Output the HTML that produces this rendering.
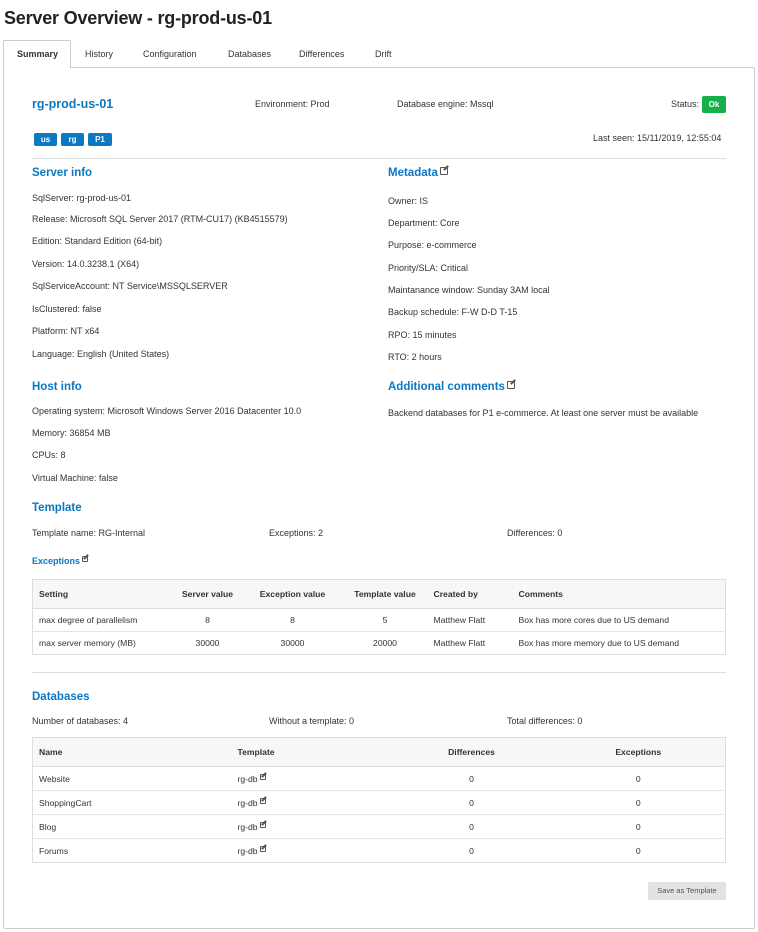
<!DOCTYPE html>
<html><head><meta charset="utf-8"><style>
*{margin:0;padding:0;box-sizing:border-box}
body{width:758px;height:932px;background:#fff;font-family:"Liberation Sans",sans-serif;color:#333;font-size:9px;position:relative;overflow:hidden}
.a{position:absolute;white-space:nowrap}
h1{position:absolute;left:4px;top:8px;font-size:18px;font-weight:bold;color:#222;letter-spacing:-0.2px}
.tab{position:absolute;top:49px;font-size:9px;color:#333}
.h{position:absolute;color:#0a78c2;font-weight:bold;font-size:11.5px;white-space:nowrap}
.b{position:absolute;top:133px;height:13px;background:#0a78c2;color:#fff;font-weight:bold;font-size:8px;border-radius:2px;text-align:center;line-height:13px}
.hr{position:absolute;height:1px;background:#ddd}
.ic{display:inline-block;width:8px;height:8px;border:1px solid #555;position:relative;margin-left:2px;vertical-align:top;border-radius:1px}
.ic:after{content:"";position:absolute;right:-2px;top:-1px;width:6px;height:2px;background:#555;transform:rotate(-45deg)}
table{position:absolute;border-collapse:collapse;border:1px solid #ddd;border-radius:3px;font-size:8.6px}
th{background:#f6f7f8;text-align:left;font-weight:bold;color:#333;height:29px;border-bottom:1px solid #ddd;padding:0 6px}
td{height:23px;border-top:1px solid #e5e5e5;padding:0 6px}
.c{text-align:center}
</style></head><body>
<h1>Server Overview - rg-prod-us-01</h1>
<div class="a" style="left:3px;top:40px;width:68px;height:28px;border:1px solid #ccc;border-bottom:none;background:#fff;z-index:2;border-radius:2px 2px 0 0"></div>
<div class="a" style="left:3px;top:67px;width:752px;height:862px;border:1px solid #ccc;border-radius:0 2px 2px 2px"></div>
<div class="tab" style="left:17px;font-weight:bold;z-index:3">Summary</div>
<div class="tab" style="left:85px">History</div>
<div class="tab" style="left:143px">Configuration</div>
<div class="tab" style="left:228px">Databases</div>
<div class="tab" style="left:299px">Differences</div>
<div class="tab" style="left:375px">Drift</div>

<div class="h" style="left:32px;top:97px;font-size:12.5px">rg-prod-us-01</div>
<div class="a" style="left:255px;top:99px">Environment: Prod</div>
<div class="a" style="left:397px;top:99px">Database engine: Mssql</div>
<div class="a" style="left:671px;top:99px">Status:</div>
<div class="a" style="left:702px;top:96px;width:24px;height:17px;background:#16b04a;color:#fff;font-weight:bold;font-size:8px;text-align:center;line-height:17px;border-radius:2px">Ok</div>
<div class="b" style="left:34px;width:23px">us</div>
<div class="b" style="left:61px;width:23px">rg</div>
<div class="b" style="left:88px;width:24px">P1</div>
<div class="a" style="left:593px;top:133px">Last seen: 15/11/2019, 12:55:04</div>
<div class="hr" style="left:32px;top:158px;width:694px"></div>

<div class="h" style="left:32px;top:167px">Server info</div>
<div class="a" style="left:32px;top:193px">SqlServer: rg-prod-us-01</div>
<div class="a" style="left:32px;top:214px">Release: Microsoft SQL Server 2017 (RTM-CU17) (KB4515579)</div>
<div class="a" style="left:32px;top:236px">Edition: Standard Edition (64-bit)</div>
<div class="a" style="left:32px;top:259px">Version: 14.0.3238.1 (X64)</div>
<div class="a" style="left:32px;top:281px">SqlServiceAccount: NT Service\MSSQLSERVER</div>
<div class="a" style="left:32px;top:304px">IsClustered: false</div>
<div class="a" style="left:32px;top:326px">Platform: NT x64</div>
<div class="a" style="left:32px;top:349px">Language: English (United States)</div>

<div class="h" style="left:388px;top:167px">Metadata<span class="ic"></span></div>
<div class="a" style="left:388px;top:196px">Owner: IS</div>
<div class="a" style="left:388px;top:218px">Department: Core</div>
<div class="a" style="left:388px;top:240px">Purpose: e-commerce</div>
<div class="a" style="left:388px;top:263px">Priority/SLA: Critical</div>
<div class="a" style="left:388px;top:285px">Maintanance window: Sunday 3AM local</div>
<div class="a" style="left:388px;top:307px">Backup schedule: F-W D-D T-15</div>
<div class="a" style="left:388px;top:330px">RPO: 15 minutes</div>
<div class="a" style="left:388px;top:352px">RTO: 2 hours</div>

<div class="h" style="left:32px;top:381px">Host info</div>
<div class="a" style="left:32px;top:406px">Operating system: Microsoft Windows Server 2016 Datacenter 10.0</div>
<div class="a" style="left:32px;top:428px">Memory: 36854 MB</div>
<div class="a" style="left:32px;top:450px">CPUs: 8</div>
<div class="a" style="left:32px;top:473px">Virtual Machine: false</div>
<div class="h" style="left:388px;top:381px">Additional comments<span class="ic"></span></div>
<div class="a" style="left:388px;top:408px">Backend databases for P1 e-commerce. At least one server must be available</div>

<div class="h" style="left:32px;top:502px">Template</div>
<div class="a" style="left:32px;top:528px">Template name: RG-Internal</div>
<div class="a" style="left:269px;top:528px">Exceptions: 2</div>
<div class="a" style="left:507px;top:528px">Differences: 0</div>
<div class="h" style="left:32px;top:556px;font-size:9px">Exceptions<span class="ic" style="width:6px;height:6px"></span></div>

<table style="left:32px;top:579px;width:694px">
<tr><th style="width:140px">Setting</th><th class="c" style="width:70px">Server value</th><th class="c" style="width:100px">Exception value</th><th class="c" style="width:85px">Template value</th><th style="width:85px">Created by</th><th>Comments</th></tr>
<tr><td>max degree of parallelism</td><td class="c">8</td><td class="c">8</td><td class="c">5</td><td>Matthew Flatt</td><td>Box has more cores due to US demand</td></tr>
<tr><td>max server memory (MB)</td><td class="c">30000</td><td class="c">30000</td><td class="c">20000</td><td>Matthew Flatt</td><td>Box has more memory due to US demand</td></tr>
</table>
<div class="hr" style="left:32px;top:672px;width:694px"></div>

<div class="h" style="left:32px;top:691px">Databases</div>
<div class="a" style="left:32px;top:716px">Number of databases: 4</div>
<div class="a" style="left:269px;top:716px">Without a template: 0</div>
<div class="a" style="left:507px;top:716px">Total differences: 0</div>
<table style="left:32px;top:737px;width:694px">
<tr><th style="width:199px">Name</th><th style="width:160px">Template</th><th class="c" style="width:160px">Differences</th><th class="c">Exceptions</th></tr>
<tr><td style="height:24px">Website</td><td>rg-db<span class="ic" style="width:6px;height:6px"></span></td><td class="c">0</td><td class="c">0</td></tr>
<tr><td style="height:24px">ShoppingCart</td><td>rg-db<span class="ic" style="width:6px;height:6px"></span></td><td class="c">0</td><td class="c">0</td></tr>
<tr><td style="height:24px">Blog</td><td>rg-db<span class="ic" style="width:6px;height:6px"></span></td><td class="c">0</td><td class="c">0</td></tr>
<tr><td style="height:24px">Forums</td><td>rg-db<span class="ic" style="width:6px;height:6px"></span></td><td class="c">0</td><td class="c">0</td></tr>
</table>
<div class="a" style="left:648px;top:882px;width:78px;height:18px;background:#e2e2e2;border-radius:2px;font-size:7.5px;color:#555;text-align:center;line-height:18px">Save as Template</div>
</body></html>
